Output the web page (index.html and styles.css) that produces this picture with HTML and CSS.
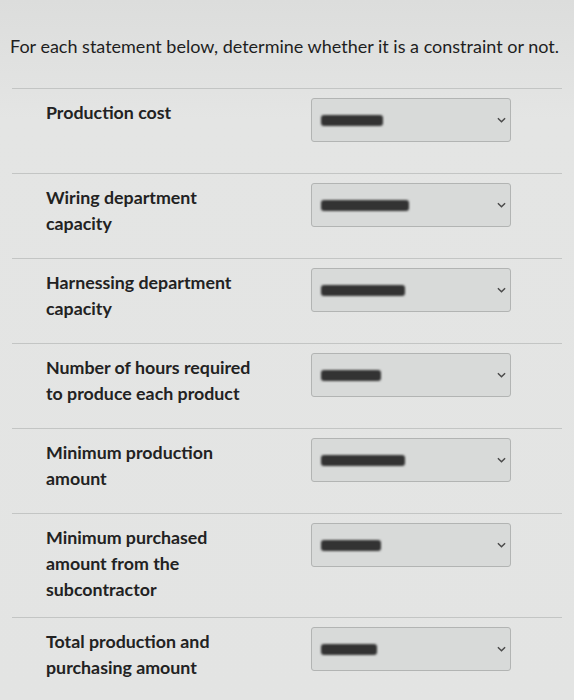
FILE: index.html
```html
<!DOCTYPE html>
<html>
<head>
<meta charset="utf-8">
<link rel="stylesheet" href="styles.css">
</head>
<body>
<div class="page">
  <p class="intro">For each statement below, determine whether it is a constraint or not.</p>
  <div class="list">
    <div class="row">
      <div class="label">Production cost</div>
      <div class="select"><span class="val" style="width:62px"></span><svg class="chev" viewBox="0 0 10 6"><path d="M1 1 L5 5 L9 1"/></svg></div>
    </div>
    <div class="row">
      <div class="label">Wiring department capacity</div>
      <div class="select"><span class="val" style="width:88px"></span><svg class="chev" viewBox="0 0 10 6"><path d="M1 1 L5 5 L9 1"/></svg></div>
    </div>
    <div class="row">
      <div class="label">Harnessing department capacity</div>
      <div class="select"><span class="val" style="width:84px"></span><svg class="chev" viewBox="0 0 10 6"><path d="M1 1 L5 5 L9 1"/></svg></div>
    </div>
    <div class="row">
      <div class="label">Number of hours required to produce each product</div>
      <div class="select"><span class="val" style="width:60px"></span><svg class="chev" viewBox="0 0 10 6"><path d="M1 1 L5 5 L9 1"/></svg></div>
    </div>
    <div class="row">
      <div class="label">Minimum production amount</div>
      <div class="select"><span class="val" style="width:84px"></span><svg class="chev" viewBox="0 0 10 6"><path d="M1 1 L5 5 L9 1"/></svg></div>
    </div>
    <div class="row">
      <div class="label">Minimum purchased amount from the subcontractor</div>
      <div class="select"><span class="val" style="width:60px"></span><svg class="chev" viewBox="0 0 10 6"><path d="M1 1 L5 5 L9 1"/></svg></div>
    </div>
    <div class="row">
      <div class="label">Total production and purchasing amount</div>
      <div class="select"><span class="val" style="width:56px"></span><svg class="chev" viewBox="0 0 10 6"><path d="M1 1 L5 5 L9 1"/></svg></div>
    </div>
  </div>
</div>
</body>
</html>
```
FILE: styles.css
```css
html, body {
  margin: 0;
  padding: 0;
  background: #e3e4e3;
}
.page {
  font-family: Lato, "Open Sans", sans-serif;
  color: #1e1e1e;
  padding: 0 12px 0 10px;
  background: linear-gradient(#dcdddc, #e4e5e4 120px, #e3e4e3);
  min-height: 700px;
}
.intro {
  margin: 0;
  padding: 34px 0 0;
  font-size: 18px;
  line-height: 24px;
  height: 54px;
  white-space: nowrap;
}
.list {
  margin-left: 2px;
  border-top: 1px solid #c3c5c4;
}
.row {
  display: grid;
  grid-template-columns: 212px 200px;
  column-gap: 53px;
  align-items: start;
  padding: 9px 0 15px 34px;
  min-height: 60px;
  border-bottom: 1px solid #c3c5c4;
}
.label {
  font-weight: bold;
  font-size: 17.8px;
  line-height: 26px;
  padding-top: 1px;
  color: #222;
}
.select {
  height: 42px;
  border: 1px solid #b2b4b3;
  border-radius: 3px;
  background: #d8dad9;
  display: flex;
  align-items: center;
  justify-content: space-between;
  padding: 0 4px 0 9px;
}
.val {
  display: block;
  height: 11px;
  background: #333;
  border-radius: 3px;
  filter: blur(1.2px);
}
.chev {
  width: 9px;
  height: 6px;
  fill: none;
  stroke: #4a4a4a;
  stroke-width: 1.6;
}
```
